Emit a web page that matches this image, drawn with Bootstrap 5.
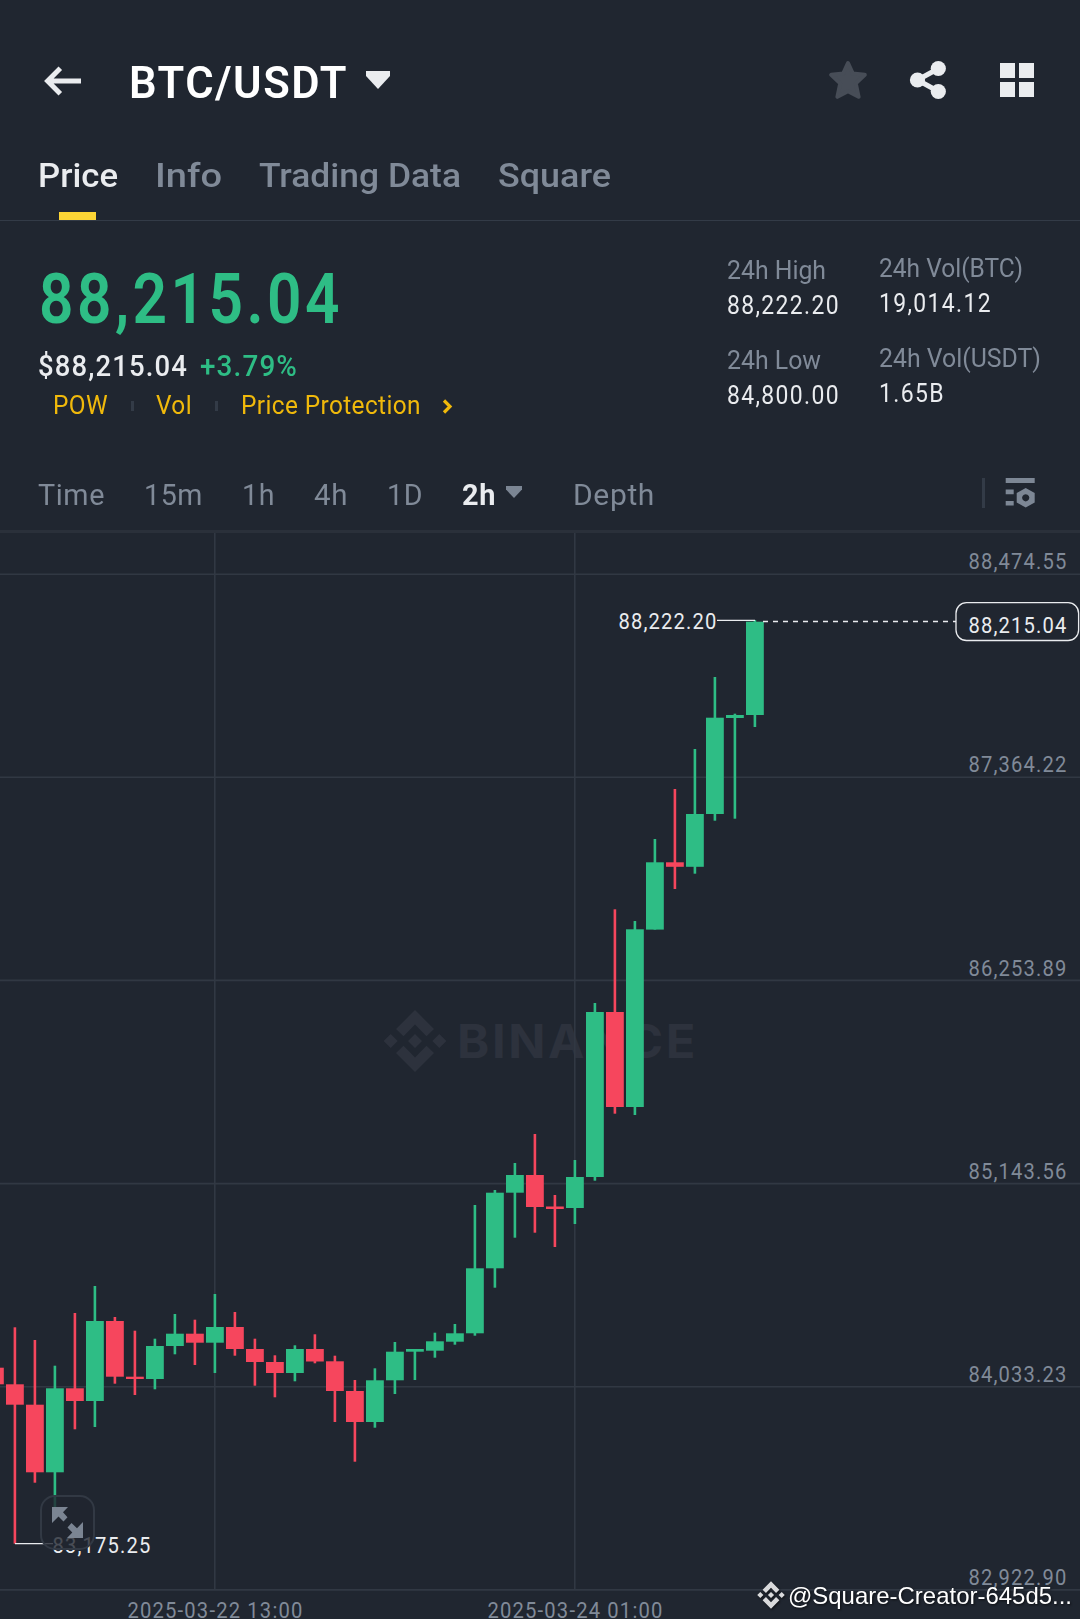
<!DOCTYPE html>
<html lang="en">
<head>
<meta charset="utf-8">
<meta name="viewport" content="width=device-width, initial-scale=1">
<title>BTC/USDT</title>
<link href="https://cdn.jsdelivr.net/npm/bootstrap@5.3.0/dist/css/bootstrap.min.css" rel="stylesheet">
<style>
:root{--bg:#202630;--line:#333b47;--muted:#808a98;--fg:#eaecef;--up:#2ebd85;--down:#f6465d;--gold:#f0b90b}
body{background:var(--bg);color:var(--fg);font-family:Roboto,"Liberation Sans",sans-serif;width:1080px;height:1619px;overflow:hidden}
.fit{display:inline-block;white-space:nowrap;transform-origin:0 50%}
.muted{color:var(--muted)}
.up{color:var(--up)}
.topbar{height:155px;padding:6px 45px 0 44px}
.pair{font-size:44px;font-weight:600;color:#fff;line-height:48px;margin:5px 0 0 48px;letter-spacing:1.5px}
.pair-caret{margin:-1px 0 0 18px}
.ico-share{margin:-2px 1px 0 42px}
.ico-grid{margin:-1px 0 0 52px}
.ico-star{margin:-1px 0 0}
.tabs{height:66px;border-bottom:1px solid var(--line);padding-left:38px;gap:37px;font-size:33.3px;font-weight:500;line-height:41px}
.tab-on{color:var(--fg);position:relative}
.tab-on::after{content:"";position:absolute;left:21px;bottom:0;width:37px;height:8px;background:#fcd535}
.ticker{height:239px;padding:43px 0 0 39px}
.last-price{font-size:70.5px;font-weight:600;line-height:70px;letter-spacing:4px}
.sub-price{font-size:29.5px;font-weight:500;line-height:30px;margin:17px 0 0 -1px;gap:12px;letter-spacing:1.2px}
.tags{font-size:25px;line-height:28px;color:var(--gold);margin:11px 0 0 14px;letter-spacing:.4px}
.tick{width:3px;height:10px;background:var(--line)}
.tick-a{margin:0 22px 0 23px}
.tick-b{margin:0 23px}
.chev{margin:0 0 0 21px}
.stats{font-size:25px;line-height:35px;margin-top:-11px}
.num{letter-spacing:1.5px}
.stats-a{width:152px}
.stats-b{width:201px;margin-top:-2px}
.pair-gap{gap:20px}
.frames{height:73px;border-bottom:3px solid #2a303a;font-size:29px;line-height:34px;padding:0 44px 0 38px;letter-spacing:.6px}
.frame-gap{margin-left:39px}
.frame-on{color:var(--fg);margin-left:39px}
.frame-caret{margin:-6px 0 0 10px}
.depth-gap{margin-left:51px}
.tools{margin-top:-4px}
.vbar{width:3px;height:30px;background:var(--line);margin-right:20px}
.chart text{font-family:Roboto,"Liberation Sans",sans-serif;font-size:22.5px;letter-spacing:1.3px}
.chart .brand{font-family:Inter,sans-serif;font-weight:700;font-size:46.5px;letter-spacing:2.5px}
.chart .handle{font-family:"Liberation Sans",Arial,sans-serif;font-size:24px;letter-spacing:0}
</style>
<script src="https://cdn.jsdelivr.net/npm/bootstrap@5.3.0/dist/js/bootstrap.bundle.min.js"></script>
</head>
<body>
<header class="topbar d-flex align-items-center">
  <svg width="37" height="30" viewBox="0 0 37 30" fill="none" stroke="#eaecef" stroke-width="5"><path d="M16.3 2.2 3.6 15l12.700 12.800M4 15h33"/></svg>
  <div class="pair"><span class="fit" data-w="219">BTC/USDT</span></div>
  <svg class="pair-caret" width="24" height="18" viewBox="0 0 24 18"><path d="M0 0h24v5L12 18 0 5z" fill="#eaecef"/></svg>
  <div class="ms-auto d-flex align-items-center">
    <svg class="ico-star" width="38" height="40" viewBox="0 0 38 40"><path d="M19 3l4.800 10.600 12 1.200-9 8.600 2.800 13.400L19 31.200 8.400 36.800l2.800-13.400-9-8.600 12-1.200z" fill="#474d57" stroke="#474d57" stroke-width="4" stroke-linejoin="round"/></svg>
    <svg class="ico-share" width="38" height="40" viewBox="0 0 38 40" fill="#eaecef"><path d="M29.500 8.500 8.500 20l21 11.500" fill="none" stroke="#eaecef" stroke-width="5"/><circle cx="29.300" cy="8.500" r="7.600"/><circle cx="8.500" cy="20" r="7.600"/><circle cx="29.300" cy="31.500" r="7.600"/></svg>
    <svg class="ico-grid" width="35" height="34" viewBox="0 0 35 34" fill="#eaecef"><path d="M0 0h15v15H0zM19 0h15v15H19zM0 19h15v15H0zM19 19h15v15H19z"/></svg>
  </div>
</header>

<nav class="tabs d-flex muted">
  <div class="tab-on"><span class="fit" data-w="80">Price</span></div>
  <div><span class="fit" data-w="67">Info</span></div>
  <div><span class="fit" data-w="202">Trading Data</span></div>
  <div><span class="fit" data-w="113">Square</span></div>
</nav>

<section class="ticker d-flex">
  <div class="flex-grow-1">
    <div class="last-price up"><span class="fit" data-w="304">88,215.04</span></div>
    <div class="sub-price d-flex"><span class="fit" data-w="150">$88,215.04</span><span class="fit up" data-w="98">+3.79%</span></div>
    <div class="tags d-flex align-items-center">
      <span class="fit" data-w="55">POW</span><i class="tick tick-a"></i>
      <span class="fit" data-w="36">Vol</span><i class="tick tick-b"></i>
      <span class="fit" data-w="180">Price Protection</span>
      <svg class="chev" width="11" height="15" viewBox="0 0 11 15"><path d="M2 1.500l6 6-6 6" fill="none" stroke="#f0b90b" stroke-width="3.200"/></svg>
    </div>
  </div>
  <div class="stats d-flex">
    <div class="stats-a d-flex flex-column pair-gap">
      <div><div class="muted"><span class="fit" data-w="99">24h High</span></div><div class="num"><span class="fit" data-w="113">88,222.20</span></div></div>
      <div><div class="muted"><span class="fit" data-w="94">24h Low</span></div><div class="num"><span class="fit" data-w="113">84,800.00</span></div></div>
    </div>
    <div class="stats-b d-flex flex-column pair-gap">
      <div><div class="muted"><span class="fit" data-w="144">24h Vol(BTC)</span></div><div class="num"><span class="fit" data-w="113">19,014.12</span></div></div>
      <div><div class="muted"><span class="fit" data-w="162">24h Vol(USDT)</span></div><div class="num"><span class="fit" data-w="66">1.65B</span></div></div>
    </div>
  </div>
</section>

<nav class="frames d-flex align-items-center muted">
  <span class="fit" data-w="67">Time</span>
  <span class="fit frame-gap" data-w="59">15m</span>
  <span class="fit frame-gap" data-w="33">1h</span>
  <span class="fit frame-gap" data-w="34">4h</span>
  <span class="fit frame-gap" data-w="36">1D</span>
  <b class="frame-on"><span class="fit" data-w="34">2h</span></b>
  <svg class="frame-caret" width="16" height="12" viewBox="0 0 16 12"><path d="M0 0h16v3.500L8 12 0 3.500z" fill="#7b8593"/></svg>
  <span class="fit depth-gap" data-w="82">Depth</span>
  <div class="tools ms-auto d-flex align-items-center">
    <i class="vbar"></i>
    <svg width="31" height="30" viewBox="0 0 31 30" fill="#7d8795"><path d="M.7 0h29v5H.7zM.7 11.500h8v4.700h-8zM.7 23h8v4.500h-8z"/><path fill-rule="evenodd" d="M20.700 10l9 5v9.600l-9 5-9-5V15zM20.700 16.200a3.600 3.600 0 1 0 .01 0z"/></svg>
  </div>
</nav>

<svg class="chart d-block" width="1080" height="1086" viewBox="0 533 1080 1086">
  <defs>
    <g id="diamond-mark"><path d="M0-31 19-12 11.500-4.800 0-16.500-11.500-4.800-19-12zM0 31 19 12 11.500 4.800 0 16.500-11.500 4.800-19 12zM0-7 7 0 0 7-7 0zM-24.300-7-17.300 0-24.300 7-31.300 0zM24.300-7 31.300 0 24.300 7 17.300 0z"/></g>
  </defs>
  <g fill="#2d323d"><use href="#diamond-mark" x="415" y="1041"/><text class="brand" x="457" y="1058" textLength="241" lengthAdjust="spacingAndGlyphs">BINANCE</text></g>
  <g stroke="#313843" stroke-width="1.600">
    <path d="M0 574.200H1080M0 777.300H1080M0 980.400H1080M0 1183.600H1080M0 1386.700H1080M0 1589.900H1080M214.800 533V1590M574.800 533V1590"/>
  </g>
  <g id="candles"></g>
  <g fill="#808a98">
    <text x="968.500" y="569" textLength="99" lengthAdjust="spacingAndGlyphs">88,474.55</text>
    <text x="968.500" y="772" textLength="99" lengthAdjust="spacingAndGlyphs">87,364.22</text>
    <text x="968.500" y="976" textLength="99" lengthAdjust="spacingAndGlyphs">86,253.89</text>
    <text x="968.500" y="1179" textLength="99" lengthAdjust="spacingAndGlyphs">85,143.56</text>
    <text x="968.500" y="1382" textLength="99" lengthAdjust="spacingAndGlyphs">84,033.23</text>
    <text x="968.500" y="1585" textLength="99" lengthAdjust="spacingAndGlyphs">82,922.90</text>
    <text x="127.500" y="1618" textLength="176" lengthAdjust="spacingAndGlyphs">2025-03-22 13:00</text>
    <text x="487.500" y="1618" textLength="176" lengthAdjust="spacingAndGlyphs">2025-03-24 01:00</text>
  </g>
  <g fill="none" stroke="#eaecef" stroke-width="1.300">
    <path d="M717 620.300H755M15 1543.700H53"/>
    <path d="M763 621.500H956" stroke-dasharray="5 5"/>
    <rect x="956" y="602.700" width="122.600" height="37.800" rx="10.500" fill="#202630"/>
  </g>
  <g fill="#eaecef">
    <text x="618.500" y="629" textLength="99" lengthAdjust="spacingAndGlyphs">88,222.20</text>
    <text x="968.500" y="633" textLength="99" lengthAdjust="spacingAndGlyphs">88,215.04</text>
    <text x="52.500" y="1553" textLength="99" lengthAdjust="spacingAndGlyphs">83,175.25</text>
  </g>
  <rect x="41" y="1496" width="53" height="53" rx="14" fill="#202630" fill-opacity=".8" stroke="#323944" stroke-width="2"/>
  <path d="M52 1507H68L63 1512.300 67.500 1517.200 63.500 1521.500 58.500 1516.500 52 1523zM83 1538H67L72.300 1532.500 67.500 1527.500 71.500 1523 77 1528.200 83 1522z" fill="#7b8593"/>
  <g style="filter:drop-shadow(1px 1px 1px #0009)">
    <use href="#diamond-mark" transform="translate(771 1595) scale(.44)" fill="#d9dadc"/>
    <text class="handle" x="788" y="1604" fill="#fff" textLength="284" lengthAdjust="spacingAndGlyphs">@Square-Creator-645d5...</text>
  </g>
</svg>

<script>
// Condense or widen a label to the width given in data-w.
document.querySelectorAll('.fit').forEach(function (el) {
  var natural = el.getBoundingClientRect().width, target = +el.dataset.w;
  el.style.transform = 'scaleX(' + target / natural + ')';
  el.style.marginRight = (target - natural) + 'px';
  el.style.flexShrink = 0;
});

// Two-hour candles: direction, high, body top, body bottom, low.
var candles = [
 ['d',1367.7,1367.7,1384.3,1384.3],
 ['d',1327.3,1384.3,1404.7,1543.7],['d',1340,1404.7,1472.3,1482.7],['u',1365.7,1388.3,1472.3,1507],
 ['d',1313,1388.3,1401,1429.3],['u',1286,1321,1401,1427],['d',1317,1321,1376.7,1383.7],
 ['d',1330.7,1376.7,1379,1395],['u',1338.7,1346,1379,1389.3],['u',1314,1333.7,1346,1354.3],
 ['d',1319.7,1333.7,1342.7,1365],['u',1294,1327,1342.7,1373],['d',1312,1327,1349,1355.7],
 ['d',1338.7,1349,1362,1385.7],['d',1355.3,1362,1373,1397.3],['u',1345.3,1349,1373,1381.3],
 ['d',1334.3,1349,1361.5,1363.3],['d',1355.7,1361.3,1391,1422],['d',1380,1391,1422,1461.7],
 ['u',1368.3,1380.3,1422,1427.7],['u',1342,1351.7,1380.3,1394],['u',1349,1349,1351.7,1380],
 ['u',1332.7,1341.3,1350.7,1357.7],['u',1324,1333.3,1341.7,1344.7],['u',1205,1268.3,1333.3,1335.7],
 ['u',1190,1192.7,1268.3,1287.7],['u',1163,1175,1192.7,1237.7],['d',1134,1175,1207,1232.7],
 ['d',1195,1206.5,1209,1247],['u',1160,1177,1208,1224],['u',1003,1012,1177,1180.7],
 ['d',909.3,1012,1107,1113.7],['u',921,929.3,1107,1115],['u',839,862.3,929.6,929.6],
 ['d',789,862.3,866.8,889],['u',749,814,866.8,873.7],['u',677,717.7,814,820.7],
 ['u',713.7,715,718,818.7],['u',620,621.7,715,727]
];
document.getElementById('candles').innerHTML = candles.map(function (c, i) {
  var x = 14.9 + 20 * (i - 1), f = c[0] === 'u' ? '#2ebd85' : '#f6465d';
  return '<g fill="' + f + '"><rect x="' + (x - 1.3) + '" y="' + c[1] + '" width="2.6" height="' + (c[4] - c[1]) +
    '"/><rect x="' + (x - 8.9) + '" y="' + c[2] + '" width="17.8" height="' + (c[3] - c[2]) + '"/></g>';
}).join('');
</script>
</body>
</html>
